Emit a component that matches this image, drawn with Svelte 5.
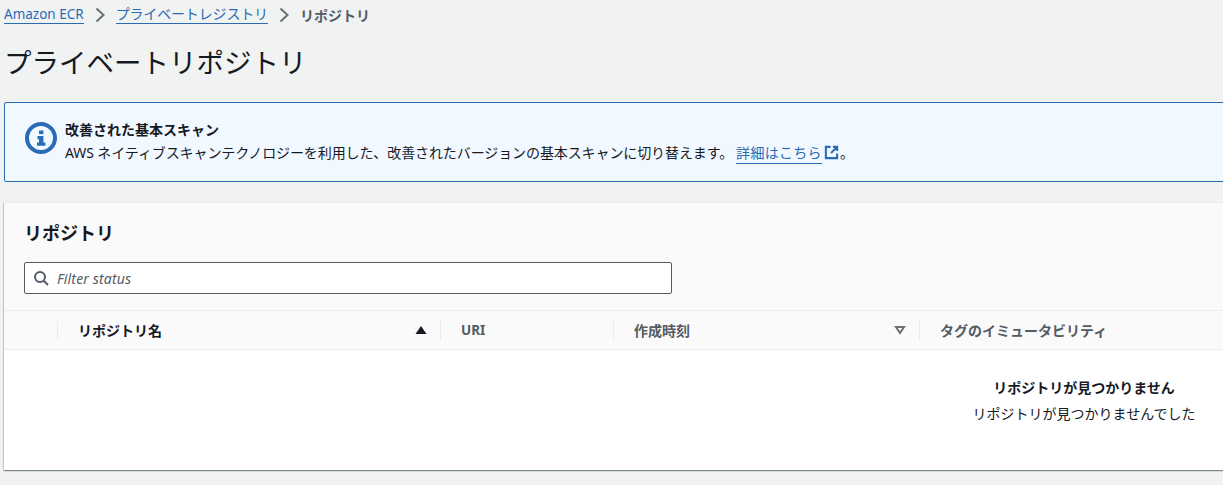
<script>
  const columns = [
    { label: 'リポジトリ名', width: 383, sort: 'asc', strong: true },
    { label: 'URI', width: 173, latin: true },
    { label: '作成時刻', width: 306, sort: 'none' },
    { label: 'タグのイミュータビリティ', width: 400 }
  ];
</script>

<div class="page">
  <nav class="crumbs">
    <a class="root" href="#a">Amazon ECR</a>
    <svg class="chev" viewBox="0 0 16 16" aria-hidden="true"><path d="M4.5 1.5l7 6.5-7 6.5" /></svg>
    <a class="mid" href="#b">プライベートレジストリ</a>
    <svg class="chev" viewBox="0 0 16 16" aria-hidden="true"><path d="M4.5 1.5l7 6.5-7 6.5" /></svg>
    <span class="current">リポジトリ</span>
  </nav>

  <h1>プライベートリポジトリ</h1>

  <section class="alert">
    <svg class="info" viewBox="0 0 32 32" aria-hidden="true">
      <circle cx="16" cy="16" r="14" />
      <rect x="14" y="8.5" width="4.4" height="3.6" />
      <path d="M12.5 14h5.9v6.5h2v3.2h-8.4v-3.2h2v-3.3h-1.5z" />
    </svg>
    <div class="alert-text">
      <div class="alert-title">改善された基本スキャン</div>
      <div class="alert-body">
        AWS ネイティブスキャンテクノロジーを利用した、改善されたバージョンの基本スキャンに切り替えます。<a href="#c"><span class="link-label">詳細はこちら</span><svg class="ext" viewBox="0 0 16 16" aria-hidden="true"><path d="M7 2H2v12h12V9M9.5 2H14v4.5M14 2L7.5 8.5" /></svg></a>。
      </div>
    </div>
  </section>

  <section class="panel">
    <header class="panel-head">
      <h2>リポジトリ</h2>
      <div class="filter">
        <svg class="search" viewBox="0 0 16 16" aria-hidden="true"><circle cx="7" cy="7" r="5" /><path d="M10.7 10.7L15 15" /></svg>
        <span>Filter status</span>
      </div>
    </header>

    <div class="thead">
      <div class="select-col"></div>
      {#each columns as col}
        <div class="th" class:strong={col.strong} class:latin={col.latin} style="width:{col.width}px">
          <span>{col.label}</span>
          {#if col.sort === 'asc'}
            <svg class="sort" viewBox="0 0 12 10" aria-hidden="true"><path class="fill" d="M6 1l5.5 8H.5z" /></svg>
          {:else if col.sort === 'none'}
            <svg class="sort" viewBox="0 0 12 10" aria-hidden="true"><path class="line" d="M2 2h8L6 8z" /></svg>
          {/if}
        </div>
      {/each}
    </div>

    <div class="empty">
      <div class="empty-title">リポジトリが見つかりません</div>
      <div class="empty-body">リポジトリが見つかりませんでした</div>
    </div>
  </section>
</div>

<style>
  :global(body) {
    margin: 0;
    background: #f1f2f2;
    overflow: hidden;
  }
  .page {
    width: 1223px;
    height: 485px;
    overflow: hidden;
    box-sizing: border-box;
    padding-left: 4px;
    font-family: "Noto Sans", "Noto Sans CJK JP", sans-serif;
    font-size: 14px;
    color: #16191f;
  }
  .crumbs {
    display: flex;
    align-items: center;
    height: 30px;
    font-size: 14px;
    white-space: nowrap;
  }
  .crumbs a {
    color: #2a6bb5;
    text-decoration: none;
    border-bottom: 1px solid #2a6bb5;
    line-height: 18px;
    margin-top: -1px;
  }
  .crumbs a.root {
    font-size: 13.5px;
  }
  .crumbs a.mid {
    letter-spacing: -0.15px;
  }
  .chev {
    width: 16px;
    height: 16px;
    margin: 0 8px 0 8px;
    fill: none;
    stroke: #687078;
    stroke-width: 2;
  }
  .current {
    color: #545b64;
    font-weight: 700;
    font-size: 14px;
  }
  h1 {
    margin: 13px 0 0 0;
    font-size: 27.5px;
    line-height: 40px;
    font-weight: 400;
    color: #16191f;
    white-space: nowrap;
  }
  .alert {
    box-sizing: border-box;
    display: flex;
    align-items: center;
    width: 1300px;
    height: 80px;
    margin-top: 19px;
    border: 1px solid #2a6bb5;
    border-radius: 2px;
    background: #f1f8ff;
    padding-left: 20px;
  }
  .info {
    width: 32px;
    height: 32px;
    flex: none;
    margin-right: 8px;
    margin-top: -9px;
  }
  .info circle {
    fill: none;
    stroke: #2a6bb5;
    stroke-width: 4;
  }
  .info rect,
  .info path {
    fill: #2a6bb5;
  }
  .alert-text {
    white-space: nowrap;
  }
  .alert-title {
    font-weight: 700;
    font-size: 14px;
    line-height: 20px;
    margin-top: 1px;
  }
  .alert-body {
    font-size: 14px;
    line-height: 26px;
    letter-spacing: -0.1px;
  }
  .alert-body a {
    color: #2a6bb5;
    text-decoration: none;
    margin-left: 3px;
  }
  .link-label {
    border-bottom: 1px solid #2a6bb5;
    padding-bottom: 1px;
    letter-spacing: 0.3px;
  }
  .ext {
    width: 15px;
    height: 15px;
    margin-left: 2px;
    margin-right: 1px;
    vertical-align: -2px;
    fill: none;
    stroke: #2a6bb5;
    stroke-width: 2.2;
  }
  .panel {
    width: 2160px;
    height: 268px;
    margin-top: 20px;
    background: #fff;
    box-shadow: 0 1px 1px 0 rgba(0, 28, 36, 0.3), 1px 1px 1px 0 rgba(0, 28, 36, 0.15), -1px 1px 1px 0 rgba(0, 28, 36, 0.15);
    border-top: 1px solid #eaeded;
    box-sizing: border-box;
  }
  .panel-head {
    background: #fafafa;
    padding: 17px 20px 16px;
    height: 108px;
    box-sizing: border-box;
    border-bottom: 1px solid #eaeded;
  }
  h2 {
    margin: 0;
    font-size: 18px;
    line-height: 26px;
    font-weight: 700;
    color: #16191f;
  }
  .filter {
    box-sizing: border-box;
    display: flex;
    align-items: center;
    width: 648px;
    height: 32px;
    margin-top: 16px;
    background: #fff;
    border: 1px solid #545b64;
    border-radius: 2px;
    padding-left: 8px;
    color: #545b64;
    font-size: 14px;
    font-style: italic;
  }
  .filter span {
    margin-top: 1px;
    letter-spacing: 0.15px;
  }
  .search {
    width: 16px;
    height: 16px;
    margin-right: 8px;
    fill: none;
    stroke: #545b64;
    stroke-width: 2;
  }
  .thead {
    display: flex;
    align-items: center;
    height: 38px;
    background: #fafafa;
    border-bottom: 1px solid #eaeded;
    box-sizing: content-box;
  }
  .select-col {
    width: 53px;
    flex: none;
  }
  .th {
    box-sizing: border-box;
    flex: none;
    display: flex;
    align-items: center;
    justify-content: space-between;
    height: 19px;
    padding: 0 13px 0 20px;
    border-left: 1px solid #eaeded;
    font-size: 14px;
    font-weight: 700;
    color: #545b64;
    white-space: nowrap;
  }
  .th.strong {
    color: #16191f;
  }
  .th.latin {
    font-size: 13.5px;
  }
  .sort {
    width: 12px;
    height: 10px;
  }
  .sort .fill {
    fill: #16191f;
  }
  .sort .line {
    fill: none;
    stroke: #687078;
    stroke-width: 2;
  }
  .empty {
    text-align: center;
    padding-top: 25px;
    font-size: 14px;
  }
  .empty-title {
    font-weight: 700;
    line-height: 26px;
  }
  .empty-body {
    line-height: 26px;
  }
</style>
